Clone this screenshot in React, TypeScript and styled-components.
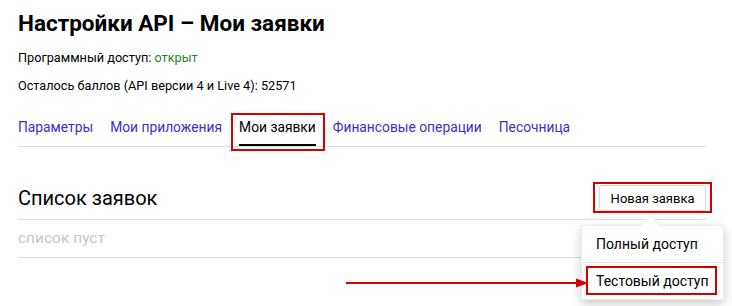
import * as React from 'react';
import styled, { createGlobalStyle } from 'styled-components';

const GlobalStyle = createGlobalStyle`
    html, body {
        margin: 0;
        padding: 0;
        background: #fff;
    }
    body {
        font-family: Roboto, "Liberation Sans", sans-serif;
        color: #000;
    }
`;

const tabs = ['Параметры', 'Мои приложения', 'Мои заявки', 'Финансовые операции', 'Песочница'];
const activeTab = 'Мои заявки';

export default function App() {
    return (
        <StyledRoot>
            <GlobalStyle />
            <StyledPage>
                <StyledTitle>Настройки API – Мои заявки</StyledTitle>
                <StyledInfo>
                    Программный доступ: <StyledOpen>открыт</StyledOpen>
                </StyledInfo>
                <StyledInfo>Осталось баллов (API версии 4 и Live 4): 52571</StyledInfo>

                <StyledTabs>
                    {tabs.map(tab => (
                        <StyledTab key={tab} active={tab === activeTab}>{tab}</StyledTab>
                    ))}
                </StyledTabs>

                <StyledHeader>
                    <StyledHeading>Список заявок</StyledHeading>
                    <StyledMenuAnchor>
                        <StyledButton type="button">Новая заявка</StyledButton>
                        <StyledPopup>
                            <StyledItem>Полный доступ</StyledItem>
                            <StyledItem marked>Тестовый доступ</StyledItem>
                        </StyledPopup>
                    </StyledMenuAnchor>
                </StyledHeader>

                <StyledEmpty>список пуст</StyledEmpty>
            </StyledPage>

            <StyledArrow width="242" height="12" viewBox="0 0 242 12">
                <line x1="0" y1="5" x2="232" y2="5" stroke="#d40000" strokeWidth="2" />
                <polygon points="230,0.5 242,5 230,9.5" fill="#d40000" />
            </StyledArrow>
        </StyledRoot>
    );
}

const StyledRoot = styled.div`
    position: relative;
    width: 732px;
    height: 306px;
    overflow: hidden;
`;

const StyledPage = styled.div`
    width: 688px;
    padding: 9px 0 0 18px;
`;

const StyledTitle = styled.h1`
    margin: 0 0 7px;
    font-size: 22.5px;
    line-height: 28px;
    font-weight: 700;
`;

const StyledInfo = styled.div`
    font-size: 12.7px;
    line-height: 28px;
`;

const StyledOpen = styled.span`
    color: #1f861f;
`;

const StyledTabs = styled.div`
    display: flex;
    gap: 17px;
    margin-top: 17px;
    border-bottom: 1px solid #dcdcdc;
`;

const StyledTab = styled.div<{ active?: boolean }>`
    position: relative;
    font-size: 13.8px;
    line-height: 20px;
    padding-bottom: 7px;
    color: ${p => (p.active ? '#000' : '#3a30cc')};
    border-bottom: 2px solid ${p => (p.active ? '#000' : 'transparent')};

    ${p => p.active && `
        &::after {
            content: '';
            position: absolute;
            inset: -4px -9px -7px -8px;
            border: 2px solid #d40000;
        }
    `}
`;

const StyledHeader = styled.div`
    display: flex;
    align-items: center;
    justify-content: space-between;
    margin-top: 38px;
    padding-bottom: 8px;
    border-bottom: 1px solid #dcdcdc;
`;

const StyledHeading = styled.h2`
    margin: 0;
    font-size: 20px;
    line-height: 26px;
    font-weight: 400;
`;

const StyledMenuAnchor = styled.div`
    position: relative;

    &::before {
        content: '';
        position: absolute;
        inset: -3px -6px -2px -6px;
        border: 2px solid #d40000;
        pointer-events: none;
    }
`;

const StyledButton = styled.button`
    display: block;
    height: 26px;
    padding: 0 10.5px;
    border: 1px solid #d4d4d4;
    border-radius: 3px;
    background: #fff;
    font-family: inherit;
    font-size: 13px;
    color: #000;
`;

const StyledPopup = styled.div`
    position: absolute;
    top: 40px;
    right: -18px;
    width: 141px;
    background: #fff;
    border: 1px solid #ececec;
    box-shadow: 0 4px 10px rgba(0, 0, 0, 0.2);
    z-index: 2;

    &::before {
        content: '';
        position: absolute;
        top: -8px;
        left: 61px;
        width: 14px;
        height: 14px;
        background: #fff;
        border-top: 1px solid #ececec;
        border-left: 1px solid #ececec;
        transform: rotate(45deg);
    }
`;

const StyledItem = styled.div<{ marked?: boolean }>`
    position: relative;
    padding: 0 14px;
    font-size: 14px;
    line-height: 36px;
    white-space: nowrap;

    & + & {
        border-top: 1px solid #e4e4e4;
    }

    ${p => p.marked && `
        &::after {
            content: '';
            position: absolute;
            inset: 3px 6px 4px 4px;
            border: 2px solid #d40000;
        }
    `}
`;

const StyledEmpty = styled.div`
    font-size: 15.5px;
    line-height: 37px;
    color: #c8c8c8;
    border-bottom: 1px solid #dcdcdc;
`;

const StyledArrow = styled.svg`
    position: absolute;
    left: 346px;
    top: 278px;
    z-index: 3;
`;
